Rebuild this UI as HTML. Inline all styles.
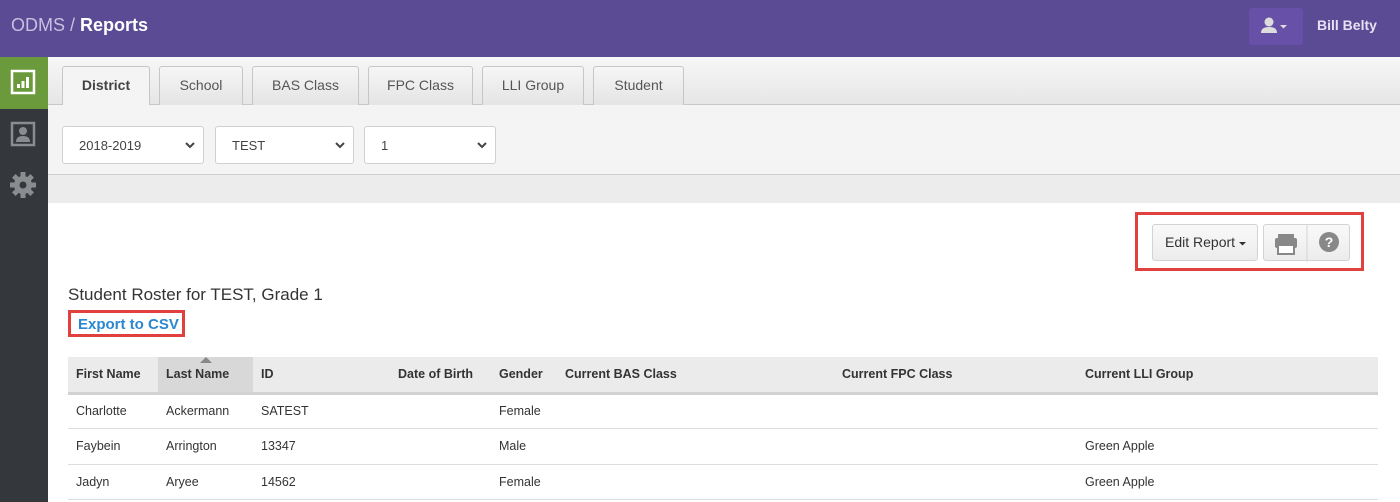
<!DOCTYPE html>
<html><head><style>
*{box-sizing:border-box;margin:0;padding:0}
body{width:1400px;height:502px;overflow:hidden;font-family:"Liberation Sans",Arial,sans-serif;background:#fff;position:relative;color:#333}
.hdr{position:absolute;left:0;top:0;width:1400px;height:57px;background:#5a4b94}
.hdr .t{position:absolute;left:11px;top:15px;font-size:18px;color:#c7c0e0}
.hdr .t b{color:#fff;font-weight:bold}
.ub{position:absolute;left:1249px;top:8px;width:54px;height:37px;background:#6750a8;border-radius:3px}
.un{position:absolute;left:1317px;top:17px;color:#e6e2f3;font-size:14px;font-weight:bold}
.side{position:absolute;left:0;top:57px;width:48px;height:445px;background:#34373b}
.act{position:absolute;left:0;top:57px;width:48px;height:52px;background:#6a9a3b}
.tabbar{position:absolute;left:48px;top:57px;width:1352px;height:48px;background:linear-gradient(#f7f7f7,#e6e6e6);border-bottom:1px solid #c8c8c8}
.tab{position:absolute;top:9px;height:39px;border:1px solid #c6c6c6;border-bottom:none;border-radius:3px 3px 0 0;background:linear-gradient(#f6f6f6,#e4e4e4);font-size:14px;color:#555;text-align:center;line-height:37px}
.tab.on{background:#f4f4f4;font-weight:bold;color:#444;height:40px}
.filt{position:absolute;left:48px;top:105px;width:1352px;height:70px;background:#f4f4f4;border-bottom:1px solid #cfcfcf}
.sel{position:absolute;top:21px;height:38px;background:#fff;border:1px solid #d0d0d0;border-radius:3px;font-size:13px;color:#444;padding:11px 0 0 16px}
.sel svg{position:absolute;right:8px;top:15px}
.band{position:absolute;left:48px;top:175px;width:1352px;height:28px;background:#ececec}
.redbox{position:absolute;border:3px solid #e0413f}
.btn{position:absolute;top:224px;height:37px;border:1px solid #d3d3d3;background:linear-gradient(#f9f9f9,#ececec);border-radius:3px}
h3{position:absolute;left:68px;top:285px;font-size:17px;font-weight:normal;color:#333}
.csv{position:absolute;left:78px;top:316px;font-size:15px;font-weight:bold;color:#2b87cf}
table{position:absolute;left:68px;top:357px;width:1310px;border-collapse:collapse;font-size:12.5px}
th{text-align:left;height:36px;background:#ebebeb;border-bottom:3px solid #d2d2d2;padding-left:8px;color:#333}
th.s{background:#d8d8d8}
td{height:35.5px;padding-left:8px;border-bottom:1px solid #ddd;color:#333}
</style></head><body>
<div class="hdr"><div class="t">ODMS / <b>Reports</b></div>
<div class="ub"><svg width="54" height="37"><circle cx="20" cy="14" r="4.5" fill="#ddd"/><path d="M12 25 Q12 19 20 19 Q28 19 28 25Z" fill="#ddd"/><path d="M31 17h7l-3.5 3.5z" fill="#ddd"/></svg></div>
<div class="un">Bill Belty</div></div>
<div class="side"></div>
<div class="act"><svg width="48" height="52"><rect x="12" y="14" width="22" height="22" fill="none" stroke="#fff" stroke-width="2.5"/><rect x="17" y="27" width="3" height="4" fill="#fff"/><rect x="21.5" y="24" width="3" height="7" fill="#fff"/><rect x="26" y="20" width="3" height="11" fill="#fff"/></svg></div>
<svg style="position:absolute;left:0;top:109px" width="48" height="100"><rect x="12" y="14" width="22" height="22" fill="none" stroke="#8a8d90" stroke-width="2.5"/><circle cx="23" cy="22" r="4" fill="#8a8d90"/><path d="M16 33 Q16 27 23 27 Q30 27 30 33Z" fill="#8a8d90"/>
<g transform="translate(23,76)" fill="#8a8d90"><circle r="9"/><g><rect x="-2.5" y="-13" width="5" height="26"/><rect x="-13" y="-2.5" width="26" height="5"/><rect x="-2.5" y="-13" width="5" height="26" transform="rotate(45)"/><rect x="-2.5" y="-13" width="5" height="26" transform="rotate(-45)"/></g><circle r="3.5" fill="#34373b"/></g></svg>
<div class="tabbar">
<div class="tab on" style="left:14px;width:88px">District</div>
<div class="tab" style="left:111px;width:84px">School</div>
<div class="tab" style="left:204px;width:107px">BAS Class</div>
<div class="tab" style="left:320px;width:105px">FPC Class</div>
<div class="tab" style="left:434px;width:102px">LLI Group</div>
<div class="tab" style="left:545px;width:91px">Student</div>
</div>
<div class="filt">
<div class="sel" style="left:14px;width:142px">2018-2019<svg width="10" height="7"><path d="M1 1l4 4 4-4" stroke="#444" stroke-width="2" fill="none"/></svg></div>
<div class="sel" style="left:167px;width:139px">TEST<svg width="10" height="7"><path d="M1 1l4 4 4-4" stroke="#444" stroke-width="2" fill="none"/></svg></div>
<div class="sel" style="left:316px;width:132px">1<svg width="10" height="7"><path d="M1 1l4 4 4-4" stroke="#444" stroke-width="2" fill="none"/></svg></div>
</div>
<div class="band"></div>
<div class="redbox" style="left:1135px;top:212px;width:229px;height:59px"></div>
<div class="btn" style="left:1152px;width:106px;font-size:14px;color:#333;padding:9px 0 0 12px">Edit Report<svg width="10" height="8" style="margin-left:3px"><path d="M1 3h7l-3.5 3.5z" fill="#333"/></svg></div>
<div class="btn" style="left:1263px;width:87px"><svg width="87" height="37"><rect x="14" y="9" width="16" height="4" fill="#888"/><rect x="11" y="13" width="22" height="10" rx="2" fill="#888"/><rect x="14" y="20" width="16" height="9" fill="#fff" stroke="#888" stroke-width="2"/><line x1="43" y1="0" x2="43" y2="37" stroke="#d3d3d3"/><circle cx="65" cy="17" r="10" fill="#888"/><text x="65" y="22" font-size="14" font-weight="bold" fill="#fff" text-anchor="middle" font-family="Liberation Sans">?</text></svg></div>
<h3>Student Roster for TEST, Grade 1</h3>
<div class="redbox" style="left:68px;top:310px;width:117px;height:27px"></div>
<div class="csv">Export to CSV</div>
<table>
<tr><th style="width:90px">First Name</th><th class="s" style="width:95px">Last Name</th><th style="width:137px">ID</th><th style="width:101px">Date of Birth</th><th style="width:66px">Gender</th><th style="width:277px">Current BAS Class</th><th style="width:243px">Current FPC Class</th><th>Current LLI Group</th></tr>
<tr><td>Charlotte</td><td>Ackermann</td><td>SATEST</td><td></td><td>Female</td><td></td><td></td><td></td></tr>
<tr><td>Faybein</td><td>Arrington</td><td>13347</td><td></td><td>Male</td><td></td><td></td><td>Green Apple</td></tr>
<tr><td>Jadyn</td><td>Aryee</td><td>14562</td><td></td><td>Female</td><td></td><td></td><td>Green Apple</td></tr>
</table>
<svg style="position:absolute;left:200px;top:357px;z-index:2" width="12" height="6"><path d="M0 6l6-6 6 6z" fill="#888"/></svg>
</body></html>
